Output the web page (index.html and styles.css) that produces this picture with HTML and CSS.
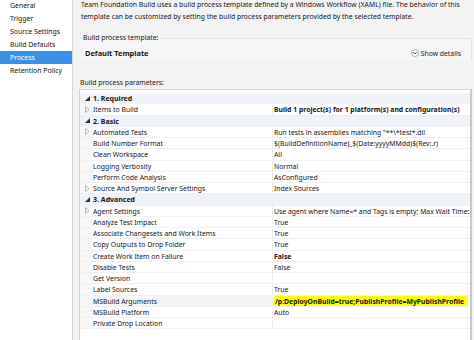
FILE: index.html
```html
<!DOCTYPE html>
<html lang="en">
<head>
    <meta charset="UTF-8">
    <title>Build Definition - Process</title>
    <link rel="stylesheet" href="styles.css">
</head>
<body>

<nav class="side-nav">
    <div class="nav-item">General</div>
    <div class="nav-item">Trigger</div>
    <div class="nav-item">Source Settings</div>
    <div class="nav-item">Build Defaults</div>
    <div class="nav-item active">Process</div>
    <div class="nav-item">Retention Policy</div>
</nav>

<main class="content">
    <p class="intro">Team Foundation Build uses a build process template defined by a Windows Workflow (XAML) file. The behavior of this template can be customized by setting the build process parameters provided by the selected template.</p>

    <fieldset class="template-box">
        <legend>Build process template:</legend>
        <div class="template-row">
            <span class="template-name">Default Template</span>
            <span class="show-details">
                <svg width="8" height="8" viewBox="0 0 8 8">
                    <circle cx="4" cy="4" r="3.5" fill="#fff" stroke="#9a9a9a" stroke-width="0.8"/>
                    <path d="M2.3 3.2 L4 4.9 L5.7 3.2" fill="none" stroke="#333" stroke-width="1"/>
                </svg>
                Show details
            </span>
        </div>
    </fieldset>

    <div class="params-label">Build process parameters:</div>

    <div class="prop-grid">
        <div class="row group"><span class="glyph"><svg width="5" height="5" viewBox="0 0 5 5"><polygon points="5,0 5,5 0,5" fill="#333"/></svg></span><span class="name">1. Required</span><span class="value"></span></div>
        <div class="row"><span class="glyph"><svg width="5" height="7" viewBox="0 0 5 7"><polygon points="0.5,0.5 4,3.5 0.5,6.5" fill="none" stroke="#a8a8a8" stroke-width="0.8"/></svg></span><span class="name">Items to Build</span><span class="value bold">Build 1 project(s) for 1 platform(s) and configuration(s)</span></div>
        <div class="row group"><span class="glyph"><svg width="5" height="5" viewBox="0 0 5 5"><polygon points="5,0 5,5 0,5" fill="#333"/></svg></span><span class="name">2. Basic</span><span class="value"></span></div>
        <div class="row"><span class="glyph"><svg width="5" height="7" viewBox="0 0 5 7"><polygon points="0.5,0.5 4,3.5 0.5,6.5" fill="none" stroke="#a8a8a8" stroke-width="0.8"/></svg></span><span class="name">Automated Tests</span><span class="value">Run tests in assemblies matching "**\*test*.dll</span></div>
        <div class="row"><span class="glyph"></span><span class="name">Build Number Format</span><span class="value">$(BuildDefinitionName)_$(Date:yyyyMMdd)$(Rev:.r)</span></div>
        <div class="row"><span class="glyph"></span><span class="name">Clean Workspace</span><span class="value">All</span></div>
        <div class="row"><span class="glyph"></span><span class="name">Logging Verbosity</span><span class="value">Normal</span></div>
        <div class="row"><span class="glyph"></span><span class="name">Perform Code Analysis</span><span class="value">AsConfigured</span></div>
        <div class="row"><span class="glyph"><svg width="5" height="7" viewBox="0 0 5 7"><polygon points="0.5,0.5 4,3.5 0.5,6.5" fill="none" stroke="#a8a8a8" stroke-width="0.8"/></svg></span><span class="name">Source And Symbol Server Settings</span><span class="value">Index Sources</span></div>
        <div class="row group"><span class="glyph"><svg width="5" height="5" viewBox="0 0 5 5"><polygon points="5,0 5,5 0,5" fill="#333"/></svg></span><span class="name">3. Advanced</span><span class="value"></span></div>
        <div class="row"><span class="glyph"><svg width="5" height="7" viewBox="0 0 5 7"><polygon points="0.5,0.5 4,3.5 0.5,6.5" fill="none" stroke="#a8a8a8" stroke-width="0.8"/></svg></span><span class="name">Agent Settings</span><span class="value">Use agent where Name=* and Tags is empty; Max Wait Time: 04:00:00</span></div>
        <div class="row"><span class="glyph"></span><span class="name">Analyze Test Impact</span><span class="value">True</span></div>
        <div class="row"><span class="glyph"></span><span class="name">Associate Changesets and Work Items</span><span class="value">True</span></div>
        <div class="row"><span class="glyph"></span><span class="name">Copy Outputs to Drop Folder</span><span class="value">True</span></div>
        <div class="row"><span class="glyph"></span><span class="name">Create Work Item on Failure</span><span class="value bold">False</span></div>
        <div class="row"><span class="glyph"></span><span class="name">Disable Tests</span><span class="value">False</span></div>
        <div class="row"><span class="glyph"></span><span class="name">Get Version</span><span class="value"></span></div>
        <div class="row"><span class="glyph"></span><span class="name">Label Sources</span><span class="value">True</span></div>
        <div class="row selected"><span class="glyph"></span><span class="name">MSBuild Arguments</span><span class="value bold"><span class="marker">/p:DeployOnBuild=true;PublishProfile=MyPublishProfile</span></span></div>
        <div class="row"><span class="glyph"></span><span class="name">MSBuild Platform</span><span class="value">Auto</span></div>
        <div class="row"><span class="glyph"></span><span class="name">Private Drop Location</span><span class="value"></span></div>
    </div>
</main>

</body>
</html>
```

FILE: styles.css
```css
body {
    margin: 0;
    padding: 0;
    display: flex;
    height: 340px;
    overflow: hidden;
    font-family: "Noto Sans", sans-serif;
    font-size: 6.85px;
    color: #161616;
    background-color: #f3f3f3;
}

/* Left navigation */
.side-nav {
    width: 72px;
    flex-shrink: 0;
    background-color: #fff;
    border-right: 1px solid #d6d6d6;
    margin-top: -1px;
    font-size: 6.9px;
}
.nav-item {
    height: 13px;
    line-height: 13px;
    padding-left: 10px;
    white-space: nowrap;
}
.nav-item.active {
    background-color: #3a90e6;
    color: #fff;
}

/* Right content */
.content {
    flex: 1;
    min-width: 0;
    display: flex;
    flex-direction: column;
    padding: 0 2px 0 6px;
}
.intro {
    margin: -1px 0 0 2px;
    line-height: 12px;
}

.template-box {
    margin: 10px 0 0 1px;
    padding: 0 8px 0 5px;
    border: 1px solid #e2e2e2;
    border-left: none;
    border-bottom: none;
    background-color: #f6f6f6;
    height: 26px;
    flex-shrink: 0;
}
.template-box legend {
    padding: 0 2px 0 0;
    margin-left: -2px;
    line-height: 10px;
}
.template-row {
    display: flex;
    justify-content: space-between;
    align-items: center;
    margin-top: 5px;
}
.template-name {
    font-weight: bold;
    font-size: 7.4px;
}
.show-details {
    display: flex;
    align-items: center;
    gap: 2px;
    margin-right: 2px;
}

.params-label {
    margin: 18px 0 0 1px;
    line-height: 10px;
}

/* Property grid */
.prop-grid {
    flex: 1;
    min-height: 0;
    overflow: hidden;
    margin-top: 1px;
    background-color: #fff;
    border: 1px solid #d2d2d2;
    border-bottom: none;
    border-right: 2px solid #c8c8c8;
    padding-top: 3px;
}
.row {
    display: grid;
    grid-template-columns: 13px 179px 1fr;
    height: 11.25px;
    line-height: 11px;
    box-sizing: border-box;
    border-bottom: 1px solid #f0f0f0;
    white-space: nowrap;
}
.row .glyph {
    display: flex;
    align-items: center;
    justify-content: flex-end;
    padding-right: 3px;
    background-color: #f7f7f7;
}
.row .name {
    overflow: hidden;
}
.row .value {
    overflow: hidden;
    border-left: 1px solid #ececec;
    padding-left: 1px;
}
.row.group {
    background-color: #eff2f6;
    font-weight: bold;
    font-size: 7px;
    border-bottom-color: #eff2f6;
}
.row.group .glyph {
    background-color: transparent;
}
.row.group .value {
    border-left: none;
}
.row.selected .name {
    background-color: #f3f5f9;
}
.bold {
    font-weight: bold;
}
.marker {
    background-color: #ffff00;
    border-radius: 6px 3px 6px 4px;
    padding: 2px 3px 2px 1px;
    box-shadow: 0 0 1px 1px #ffff00;
}
```
